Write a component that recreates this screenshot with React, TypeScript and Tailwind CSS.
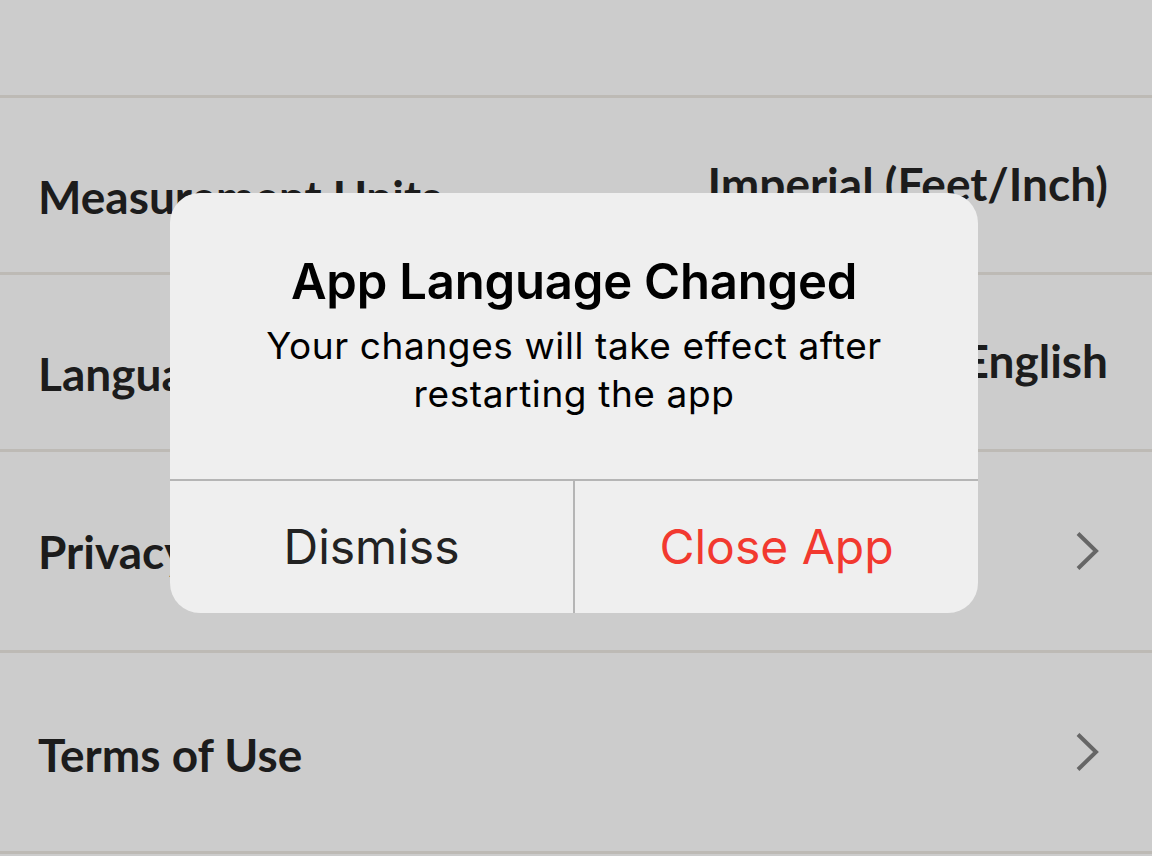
// Settings list rows behind the alert
function Chevron() {
  return (
    <svg width="24" height="40" viewBox="0 0 24 40" fill="none" className="mr-[9px]">
      <path d="M3 2.5 L21 20 L3 37.5" stroke="#666666" strokeWidth="4" />
    </svg>
  );
}

function Row({
  label,
  value,
  chevron,
  heightClass,
  labelOffset,
}: {
  label: string;
  value?: string;
  chevron?: boolean;
  heightClass: string;
  labelOffset: string;
}) {
  return (
    <div
      className={`flex items-center justify-between pl-[38px] pr-[44px] border-b-[3px] border-[#bdbab5] ${heightClass}`}
    >
      <span className={`text-[46px] font-bold text-[#1c1c1c] ${labelOffset}`}>{label}</span>
      {value && (
        <span className="text-[46px] font-bold text-[#1c1c1c] mb-[4px]">{value}</span>
      )}
      {chevron && <Chevron />}
    </div>
  );
}

export default function App() {
  return (
    <div className="relative w-[1152px] h-[856px] overflow-hidden bg-[#cccccc] font-['Lato',sans-serif]">
      <div className="h-[98px] border-b-[3px] border-[#bdbab5]" />
      <Row label="Measurement Units" value="Imperial (Feet/Inch)" heightClass="h-[177px]" labelOffset="mt-[22px]" />
      <Row label="Language" value="English" heightClass="h-[177px]" labelOffset="mt-[22px]" />
      <Row label="Privacy Policy" chevron heightClass="h-[201px]" labelOffset="" />
      <Row label="Terms of Use" chevron heightClass="h-[201px]" labelOffset="mt-[4px]" />

      {/* Alert */}
      <div className="absolute left-[170px] top-[193px] w-[808px] h-[420px] rounded-[30px] bg-[#efefef] flex flex-col font-['Inter',sans-serif] text-center">
        <div className="flex-1 pt-[60px] px-[30px]">
          <h2 className="text-[49px] leading-[58px] font-semibold text-black tracking-[-0.2px]">
            App Language Changed
          </h2>
          <p className="mt-[11px] text-[37px] leading-[48px] text-black tracking-[0.6px]">
            Your changes will take effect after
            <br />
            restarting the app
          </p>
        </div>
        <div className="h-[134px] flex border-t-2 border-[#b5b5b5]">
          <button className="flex-1 text-[48px] text-[#222222] border-r-2 border-[#b5b5b5]">
            Dismiss
          </button>
          <button className="flex-1 text-[48px] text-[#f2392f]">Close App</button>
        </div>
      </div>
    </div>
  );
}
